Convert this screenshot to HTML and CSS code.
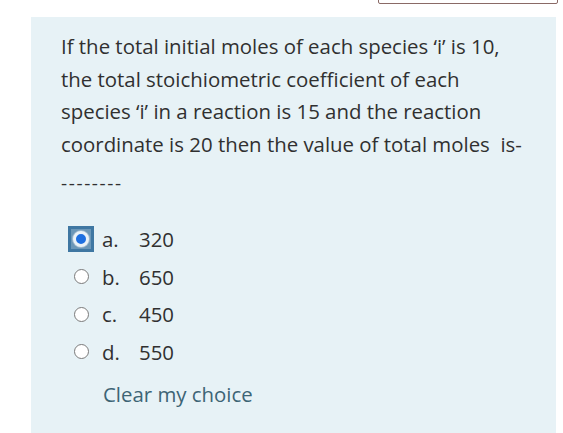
FILE: index.html
```html
<!DOCTYPE html>
<html>
<head>
<meta charset="utf-8">
<link rel="stylesheet" href="styles.css">
</head>
<body>
<div class="page">
  <div class="topbox"></div>
  <div class="panel">
    <p class="qtext">If the total initial moles of each species ‘i’ is 10,<br>the total stoichiometric coefficient of each<br>species ‘i’ in a reaction is 15 and the reaction<br>coordinate is 20 then the value of total moles&nbsp; is-</p>
    <p class="dashes">--------</p>
    <div class="answers">
      <div class="opt">
        <span class="radio-wrap focused"><span class="radio checked"></span></span>
        <span class="letter">a.</span><span class="val">320</span>
      </div>
      <div class="opt">
        <span class="radio-wrap"><span class="radio"></span></span>
        <span class="letter">b.</span><span class="val">650</span>
      </div>
      <div class="opt">
        <span class="radio-wrap"><span class="radio"></span></span>
        <span class="letter">c.</span><span class="val">450</span>
      </div>
      <div class="opt">
        <span class="radio-wrap"><span class="radio"></span></span>
        <span class="letter">d.</span><span class="val">550</span>
      </div>
    </div>
    <a class="clear">Clear my choice</a>
  </div>
</div>
</body>
</html>
```
FILE: styles.css
```css
html, body {
  margin: 0;
  padding: 0;
  background: #ffffff;
}
.page {
  width: 563px;
  height: 433px;
  position: relative;
  overflow: hidden;
  font-family: "Open Sans", "Noto Sans", sans-serif;
  color: #303030;
}
.topbox {
  position: absolute;
  left: 378px;
  top: -20px;
  width: 178px;
  height: 22px;
  border: 1.5px solid #8a6a66;
  border-radius: 2px;
}
.panel {
  margin: 17px 7px 0 31px;
  height: 416px;
  background: #e7f2f6;
  padding: 13px 20px 0 30px;
  box-sizing: border-box;
}
.qtext {
  margin: 0;
  font-size: 20.4px;
  line-height: 32.7px;
  white-space: nowrap;
}
.dashes {
  margin: 12px 0 0 0;
  font-size: 19px;
  line-height: 20px;
  letter-spacing: 1.6px;
}
.answers {
  margin-top: 33px;
  display: flex;
  flex-direction: column;
  gap: 10.5px;
}
.opt {
  display: flex;
  align-items: center;
  height: 27px;
  font-size: 20.4px;
}
.radio-wrap {
  width: 26px;
  height: 26px;
  margin-left: 7px;
  display: flex;
  align-items: center;
  justify-content: center;
  box-sizing: border-box;
}
.radio-wrap.focused {
  background: #6b97b8;
  border: 3px solid #3f77a2;
}
.radio {
  width: 15px;
  height: 15px;
  border-radius: 50%;
  border: 1.5px solid #7a7a7a;
  background: #fff;
  box-sizing: border-box;
}
.radio.checked {
  width: 16px;
  height: 16px;
  border: 3px solid #e9f2f8;
  background: #1e6fe0;
  box-shadow: 0 0 0 1px #9fb8cc;
}
.letter {
  margin-left: 8px;
  width: 37px;
}
.clear {
  display: block;
  margin-top: 16px;
  margin-left: 42px;
  font-size: 20.4px;
  line-height: 27px;
  color: #3d6475;
}
```
